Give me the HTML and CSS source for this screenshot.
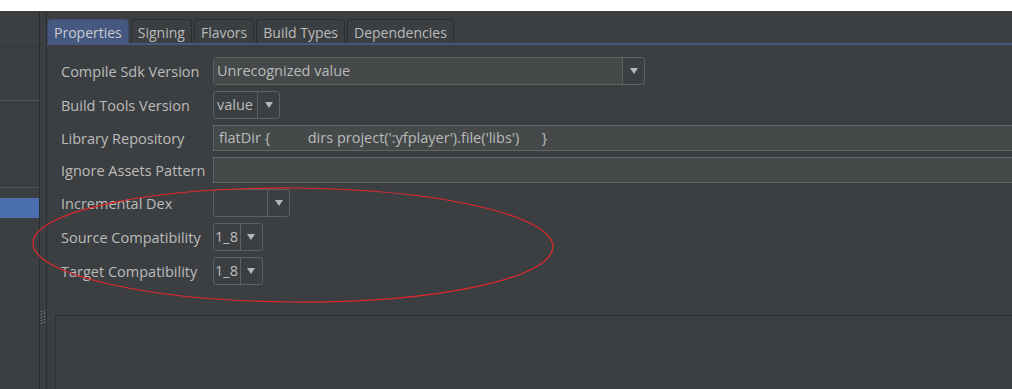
FILE: index.html
```html
<!DOCTYPE html>
<html lang="en">
<head>
    <meta charset="UTF-8">
    <title>Project Structure - app</title>
    <link rel="stylesheet" href="styles.css">
</head>
<body>
    <div class="topband"></div>
    <div class="ide">
        <div class="sidebar">
            <div class="side-head"></div>
            <div class="side-group"></div>
            <div class="side-list"></div>
            <div class="side-item selected"></div>
        </div>
        <div class="splitter">
            <svg class="grip" width="5" height="16" viewBox="0 0 5 16">
                <g fill="#8a8d90">
                    <rect x="0" y="1" width="1" height="1"/><rect x="3" y="0" width="1" height="1"/>
                    <rect x="0" y="4" width="1" height="1"/><rect x="3" y="3" width="1" height="1"/>
                    <rect x="0" y="7" width="1" height="1"/><rect x="3" y="6" width="1" height="1"/>
                    <rect x="0" y="10" width="1" height="1"/><rect x="3" y="9" width="1" height="1"/>
                    <rect x="0" y="13" width="1" height="1"/><rect x="3" y="12" width="1" height="1"/>
                </g>
            </svg>
        </div>
        <div class="main">
            <div class="tabs">
                <div class="tab active">Properties</div>
                <div class="tab">Signing</div>
                <div class="tab">Flavors</div>
                <div class="tab">Build Types</div>
                <div class="tab">Dependencies</div>
            </div>
            <div class="panel">
                <div class="form">
                    <div class="row">
                        <label>Compile Sdk Version</label>
                        <div class="combo wide"><span class="val">Unrecognized value</span><span class="arrow"></span></div>
                    </div>
                    <div class="row">
                        <label>Build Tools Version</label>
                        <div class="combo"><span class="val">value</span><span class="arrow"></span></div>
                    </div>
                    <div class="row text">
                        <label>Library Repository</label>
                        <div class="field">flatDir {&nbsp;&nbsp;&nbsp;&nbsp;&nbsp;&nbsp;&nbsp;&nbsp;&nbsp; dirs project(':yfplayer').file('libs')&nbsp;&nbsp;&nbsp;&nbsp;&nbsp; }</div>
                    </div>
                    <div class="row text">
                        <label>Ignore Assets Pattern</label>
                        <div class="field"></div>
                    </div>
                    <div class="row">
                        <label>Incremental Dex</label>
                        <div class="combo"><span class="val empty"></span><span class="arrow"></span></div>
                    </div>
                    <div class="row">
                        <label>Source Compatibility</label>
                        <div class="combo"><span class="val small">1_8</span><span class="arrow"></span></div>
                    </div>
                    <div class="row">
                        <label>Target Compatibility</label>
                        <div class="combo"><span class="val small">1_8</span><span class="arrow"></span></div>
                    </div>
                </div>
                <div class="lower"></div>
            </div>
        </div>
    </div>
    <svg class="mark" width="1012" height="389" viewBox="0 0 1012 389">
        <ellipse cx="293" cy="245" rx="260" ry="57" fill="none" stroke="#e0282c" stroke-width="1.2" transform="rotate(0.4 293 245)"/>
    </svg>
</body>
</html>
```

FILE: styles.css
```css
body {
    margin: 0;
    width: 1012px;
    height: 389px;
    overflow: hidden;
    background: #3c3f41;
    font-family: "Open Sans", "Noto Sans", sans-serif;
    font-size: 14.5px;
    color: #bbbbbb;
    position: relative;
}
.topband {
    height: 11px;
    background: #ffffff;
}
.ide {
    display: flex;
    height: 378px;
}
.sidebar {
    width: 39px;
    border-right: 1px solid #2b2d2e;
    display: flex;
    flex-direction: column;
}
.side-head {
    height: 35px;
    border-bottom: 1px solid #323436;
}
.side-group {
    height: 53px;
    border-bottom: 1px solid #55585a;
}
.side-list {
    height: 86px;
    border-bottom: 1px solid #505355;
}
.side-item {
    height: 20px;
    margin-top: 10px;
}
.side-item.selected {
    background: #4b6eaf;
}
.splitter {
    width: 7px;
    border-right: 1px solid #2b2d2e;
    display: flex;
    justify-content: center;
    padding-top: 299px;
    box-sizing: border-box;
}
.grip {
    display: block;
}
.main {
    flex: 1;
    display: flex;
    flex-direction: column;
    min-width: 0;
}
.tabs {
    display: flex;
    gap: 2px;
    padding-top: 8px;
    height: 24px;
    border-bottom: 2px solid #46587e;
    font-size: 14px;
}
.tab {
    height: 23px;
    padding: 0 6px;
    line-height: 25px;
    border: 1px solid #2b2d2e;
    border-bottom: none;
    border-radius: 4px 4px 0 0;
    color: #bbbbbb;
    white-space: nowrap;
}
.tab.active {
    background: #45587f;
    border-color: #3a4a6b;
    color: #c8ccd2;
}
.panel {
    flex: 1;
    display: flex;
    flex-direction: column;
    border-left: 1px solid #2b2d2e;
    margin-left: -1px;
}
.form {
    display: flex;
    flex-direction: column;
    gap: 6px;
    padding: 12px 0 0 14px;
}
.row {
    display: flex;
    align-items: center;
    height: 28px;
}
.row.text {
    height: 26px;
}
.row label {
    width: 152px;
    flex: none;
}
.combo {
    display: flex;
    height: 26px;
    border: 1px solid #5e6060;
    border-radius: 3px;
    box-sizing: content-box;
}
.combo.wide {
    width: 430px;
}
.combo .val {
    flex: 1;
    padding: 0 4px 0 3px;
    line-height: 26px;
    border-right: 1px solid #5e6060;
    white-space: nowrap;
}
.combo.wide .val {
    background: #45494a;
}
.combo .val.empty {
    width: 46px;
}
.combo .val.small {
    padding: 0 2px 0 1px;
}
.arrow {
    width: 21px;
    display: flex;
    align-items: center;
    justify-content: center;
}
.arrow::after {
    content: "";
    border-left: 4px solid transparent;
    border-right: 4px solid transparent;
    border-top: 6px solid #b4b6b8;
}
.field {
    flex: 1;
    height: 24px;
    margin-right: -20px;
    background: #45494a;
    border: 1px solid #646464;
    padding-left: 5px;
    line-height: 24px;
    white-space: nowrap;
}
.lower {
    flex: 1;
    margin: 30px 0 0 8px;
    border-top: 1px solid #2f3133;
    border-left: 1px solid #2f3133;
}
.mark {
    position: absolute;
    left: 0;
    top: 0;
    pointer-events: none;
}
```
